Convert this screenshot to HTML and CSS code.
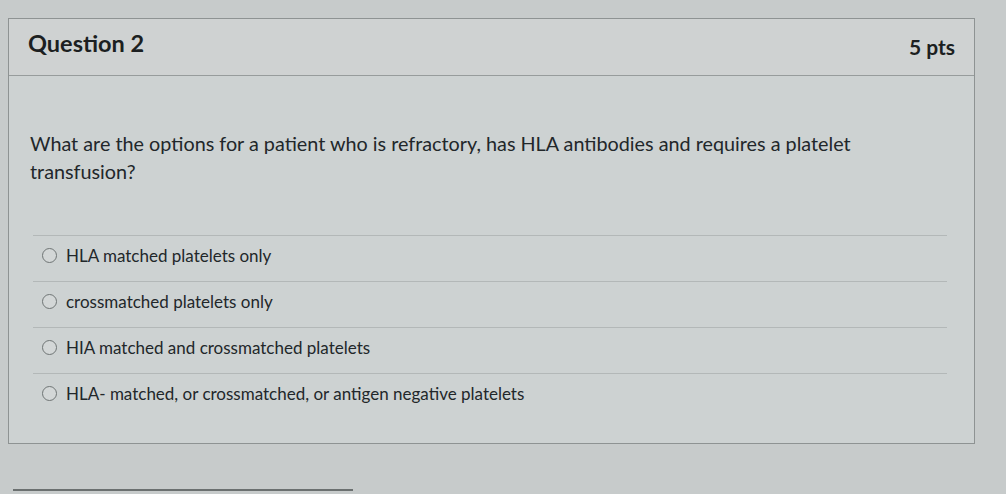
FILE: index.html
```html
<!DOCTYPE html>
<html lang="en">
<head>
<meta charset="utf-8">
<title>Question 2</title>
<link rel="stylesheet" href="styles.css">
</head>
<body>
<div class="page">
  <section class="card">
    <header class="card-header">
      <h2 class="title">Question 2</h2>
      <span class="pts">5 pts</span>
    </header>
    <div class="card-body">
      <p class="question">What are the options for a patient who is refractory, has HLA antibodies and requires a platelet transfusion?</p>
      <div class="answers">
        <label class="answer"><span class="radio"></span><span class="answer-text">HLA matched platelets only</span></label>
        <label class="answer"><span class="radio"></span><span class="answer-text">crossmatched platelets only</span></label>
        <label class="answer"><span class="radio"></span><span class="answer-text">HIA matched and crossmatched platelets</span></label>
        <label class="answer"><span class="radio"></span><span class="answer-text">HLA- matched, or crossmatched, or antigen negative platelets</span></label>
      </div>
    </div>
  </section>
  <section class="card next-card"></section>
</div>
</body>
</html>
```

FILE: styles.css
```css
html, body {
  margin: 0;
  padding: 0;
}
body {
  background: #c7cbcb;
  font-family: Lato, "Open Sans", "Liberation Sans", sans-serif;
  color: #1f2426;
  overflow: hidden;
  height: 494px;
}
.page {
  padding: 18px 31px 0 8px;
}
.card {
  border: 1px solid #8e9393;
  background: #cdd2d2;
}
.card-header {
  height: 57px;
  display: flex;
  align-items: center;
  justify-content: space-between;
  padding: 0 19px 0 19px;
  background: #cfd2d2;
  border-bottom: 1px solid #979c9c;
  box-sizing: border-box;
}
.title {
  margin: 0;
  font-size: 23.5px;
  font-weight: 700;
  color: #1c1f21;
  position: relative;
  top: -4px;
}
.pts {
  font-size: 21px;
  font-weight: 700;
  color: #1c1f21;
  position: relative;
  top: -1px;
}
.card-body {
  padding: 53px 27px 24px 21px;
}
.question {
  margin: 0 0 50px 0;
  font-size: 19.8px;
  line-height: 28px;
  color: #22272a;
  max-width: 850px;
}
.answers {
  margin-left: 3px;
}
.answer {
  display: flex;
  align-items: center;
  height: 46px;
  border-top: 1px solid #b3b8b8;
  padding: 0 0 7px 9px;
  box-sizing: border-box;
}
.radio {
  width: 13px;
  height: 13px;
  border: 1px solid #6f7575;
  border-radius: 50%;
  background: #d3d7d7;
  margin-right: 9px;
  flex: none;
}
.answer-text {
  font-size: 17px;
  color: #22272a;
}
.next-card {
  margin-top: 45px;
  height: 2px;
  border-color: #6b7070;
  border-width: 2px 0 0 0;
  margin-left: 5px;
  width: 340px;
  background: transparent;
}
```
